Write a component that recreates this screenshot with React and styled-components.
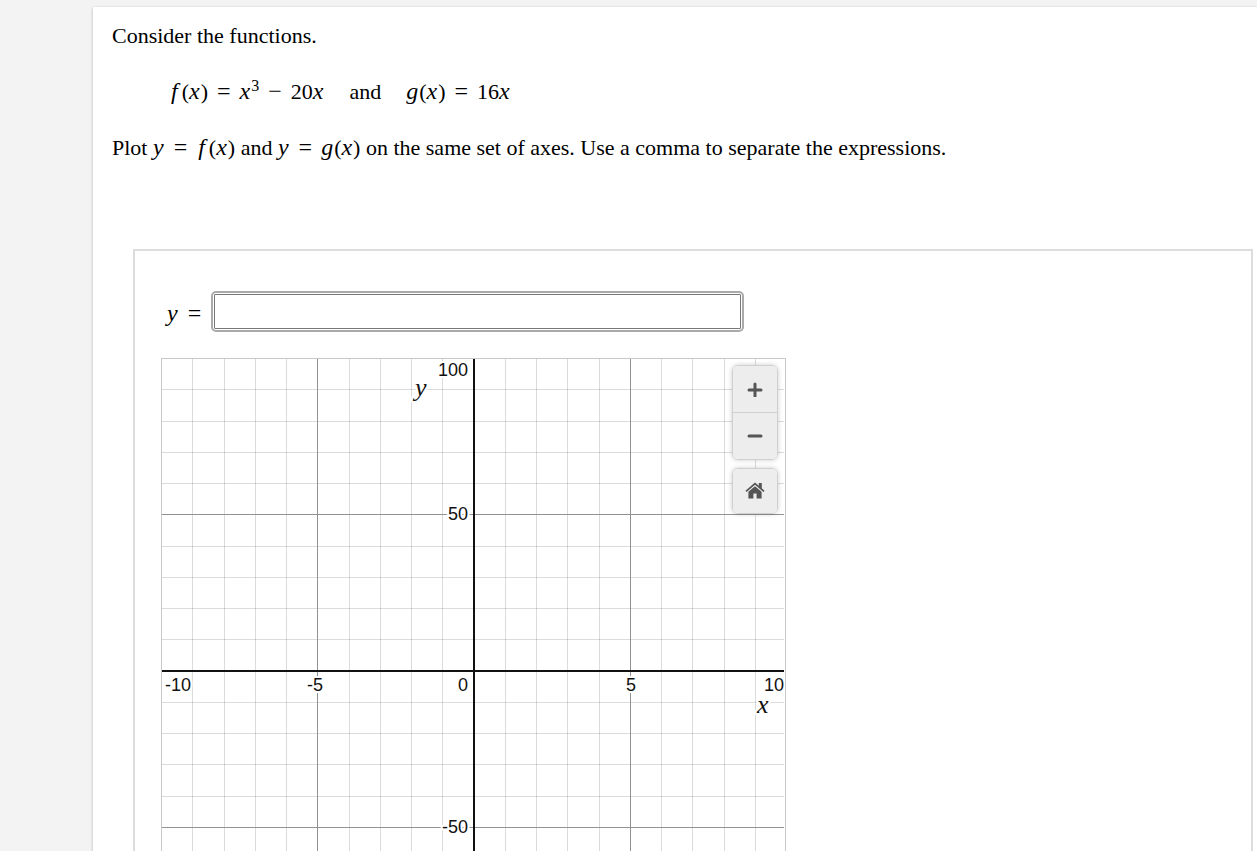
import React, { useState } from "react";
import styled, { createGlobalStyle } from "styled-components";

const SIZE = 625;
const CENTER = 313;
const UNIT = 31.25;

const steps = Array.from({ length: 19 }, (_, i) => i - 9);

const axisLabels = [
  { text: "100", x: 307, y: 18, anchor: "end" },
  { text: "50", x: 307, y: 162, anchor: "end" },
  { text: "-50", x: 307, y: 475, anchor: "end" },
  { text: "-10", x: 4, y: 333, anchor: "start" },
  { text: "-5", x: 154, y: 333, anchor: "middle" },
  { text: "0", x: 307, y: 333, anchor: "end" },
  { text: "5", x: 470, y: 333, anchor: "middle" },
  { text: "10", x: 623, y: 333, anchor: "end" },
];

const Grid = () => {
  const minor = steps.filter((n) => n % 5 !== 0);
  const major = steps.filter((n) => n % 5 === 0 && n !== 0);
  const at = (n) => Math.floor(CENTER + n * UNIT) + 0.5;
  const end = SIZE - 2;

  return (
    <Chart viewBox={`0 0 ${SIZE} ${SIZE}`} role="img" aria-label="Coordinate grid">
      {minor.map((n) => (
        <g key={n} stroke="#000" strokeOpacity="0.14">
          <line x1={at(n)} y1="1" x2={at(n)} y2={end} />
          <line x1="1" y1={at(n)} x2={end} y2={at(n)} />
        </g>
      ))}
      {major.map((n) => (
        <g key={n} stroke="#929292">
          <line x1={at(n)} y1="1" x2={at(n)} y2={end} />
          <line x1="1" y1={at(n)} x2={end} y2={at(n)} />
        </g>
      ))}
      <g stroke="#111" strokeWidth="2">
        <line x1={CENTER} y1="1" x2={CENTER} y2={end} />
        <line x1="1" y1={CENTER} x2={end} y2={CENTER} />
      </g>
      {axisLabels.map(({ text, x, y, anchor }) => (
        <Tick key={text} x={x} y={y} textAnchor={anchor}>
          {text}
        </Tick>
      ))}
      <AxisName x="254" y="38">
        y
      </AxisName>
      <AxisName x="596" y="355">
        x
      </AxisName>
      <rect x="0.5" y="0.5" width="624" height="624" fill="none" stroke="#c8c8c8" />
    </Chart>
  );
};

const HomeIcon = () => (
  <svg width="20" height="18" viewBox="0 0 20 18" aria-hidden="true">
    <path d="M1 9.3 10 1.6l9 7.7" fill="none" stroke="#555" strokeWidth="1.7" />
    <path d="M13.8 1h3v6l-3-2.6z" fill="#555" />
    <path d="M10 4.2 3.4 9.8V16.6h5v-5h3.2v5h5V9.8z" fill="#555" />
  </svg>
);

const App = () => {
  const [value, setValue] = useState("");

  return (
    <Page>
      <GlobalStyle />
      <Sheet>
        <Line>Consider the functions.</Line>
        <Equation>
          <F>f</F>(<Var>x</Var>)<Op>=</Op>
          <Var>x</Var>
          <Sup>3</Sup>
          <Op>−</Op>20<Var>x</Var>
          <Word>and</Word>
          <Var>g</Var>(<Var>x</Var>)<Op>=</Op>16<Var>x</Var>
        </Equation>
        <Line>
          Plot <Var>y</Var>
          <Op>=</Op>
          <F>f</F>(<Var>x</Var>) and <Var>y</Var>
          <Op>=</Op>
          <Var>g</Var>(<Var>x</Var>) on the same set of axes. Use a comma to
          separate the expressions.
        </Line>
        <Panel>
          <AnswerRow>
            <AnswerLabel htmlFor="answer">
              <Var>y</Var>
              <Op>=</Op>
            </AnswerLabel>
            <Field>
              <AnswerInput
                id="answer"
                type="text"
                value={value}
                autoComplete="off"
                onChange={(e) => setValue(e.target.value)}
              />
            </Field>
          </AnswerRow>
          <Graph>
            <Grid />
            <Controls>
              <ButtonGroup>
                <ToolButton type="button" aria-label="Zoom in">
                  <svg width="16" height="16" viewBox="0 0 16 16">
                    <path
                      d="M2 9h12M8 3v12"
                      stroke="#555"
                      strokeWidth="3"
                      strokeLinecap="round"
                    />
                  </svg>
                </ToolButton>
                <ToolButton type="button" aria-label="Zoom out">
                  <svg width="16" height="16" viewBox="0 0 16 16">
                    <path
                      d="M2 8h12"
                      stroke="#555"
                      strokeWidth="3"
                      strokeLinecap="round"
                    />
                  </svg>
                </ToolButton>
              </ButtonGroup>
              <ButtonGroup>
                <ToolButton type="button" aria-label="Default view">
                  <HomeIcon />
                </ToolButton>
              </ButtonGroup>
            </Controls>
          </Graph>
        </Panel>
      </Sheet>
    </Page>
  );
};

const GlobalStyle = createGlobalStyle`
  * {
    box-sizing: border-box;
  }

  body {
    margin: 0;
    background: #f3f3f3;
    color: #000;
    font-family: "Liberation Serif", "Times New Roman", serif;
    font-size: 22px;
  }
`;

const Page = styled.main`
  padding: 7px 0 0 93px;
`;

const Sheet = styled.section`
  padding: 15px 4px 32px 19px;
  background: #fff;
  box-shadow: 0 1px 3px rgba(0, 0, 0, 0.25);
`;

const Line = styled.p`
  margin: 0;
  line-height: 28px;
`;

const Equation = styled(Line)`
  margin: 28px 0;
  padding-left: 57px;
`;

const Var = styled.i`
  margin-right: 1px;
  font-size: 24px;
  line-height: 0;
`;

const F = styled(Var)`
  margin: 0 4px 0 2px;
`;

const Op = styled.span`
  margin: 0 9px;
  font-size: 24px;
  line-height: 0;
`;

const Sup = styled.sup`
  font-size: 16px;
  line-height: 0;
`;

const Word = styled.span`
  margin: 0 25px;
`;

const Panel = styled.div`
  margin: 87px 0 0 21px;
  padding: 40px 26px;
  border: 2px solid #ddd;
`;

const AnswerRow = styled.div`
  display: flex;
  align-items: center;
  gap: 1px;
  padding-left: 6px;
`;

const AnswerLabel = styled.label`
  padding-top: 4px;
  line-height: 28px;
  white-space: nowrap;
`;

const Field = styled.div`
  flex: 0 1 533px;
  display: flex;
  padding: 1px;
  border: 2px solid #aaa;
  border-radius: 5px;
`;

const AnswerInput = styled.input`
  flex: 1;
  min-width: 0;
  height: 35px;
  padding: 0 8px;
  border: 1px solid #777;
  border-radius: 1px;
  background: #fff;
  font: inherit;
  outline: none;
`;

const Graph = styled.div`
  position: relative;
  max-width: 625px;
  margin-top: 26px;
`;

const Chart = styled.svg`
  display: block;
  width: 100%;
`;

const Tick = styled.text`
  font-family: "Liberation Sans", Arial, sans-serif;
  font-size: 18px;
  fill: #111;
  stroke: #fff;
  stroke-width: 4px;
  paint-order: stroke;
`;

const AxisName = styled(Tick)`
  font-family: "Liberation Serif", "Times New Roman", serif;
  font-size: 26px;
  font-style: italic;
`;

const Controls = styled.div`
  position: absolute;
  top: 7px;
  right: 8px;
  display: flex;
  flex-direction: column;
  gap: 8px;
`;

const ButtonGroup = styled.div`
  border: 1px solid #d0d0d0;
  border-radius: 6px;
  overflow: hidden;
  box-shadow: 0 0 5px rgba(0, 0, 0, 0.2);
`;

const ToolButton = styled.button`
  display: flex;
  align-items: center;
  justify-content: center;
  width: 44px;
  height: 46px;
  padding: 0;
  border: 0;
  background: #ededed;
  cursor: pointer;

  & + & {
    height: 47px;
    border-top: 1px solid #d0d0d0;
  }

  &:only-child {
    height: 44px;
  }
`;

export default App;
